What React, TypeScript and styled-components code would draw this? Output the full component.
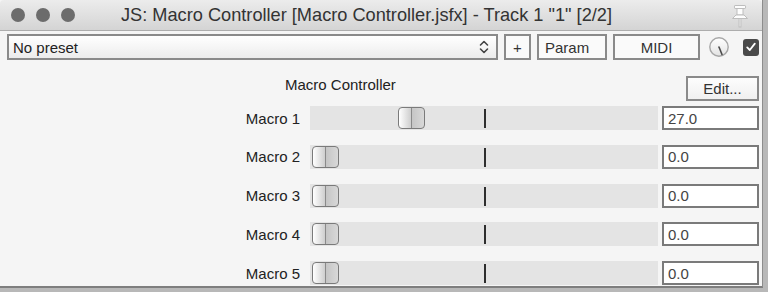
import styled, { createGlobalStyle } from 'styled-components'

const GlobalStyle = createGlobalStyle`
  html, body {
    margin: 0;
    padding: 0;
    background: #e6e6e6;
  }
  body {
    font-family: "Liberation Sans", Arial, sans-serif;
  }
`

interface Macro {
  name: string;
  value: number;
}

const macros: Macro[] = [
  { name: 'Macro 1', value: 27 },
  { name: 'Macro 2', value: 0 },
  { name: 'Macro 3', value: 0 },
  { name: 'Macro 4', value: 0 },
  { name: 'Macro 5', value: 0 },
]

const TRACK_WIDTH = 348
const THUMB_WIDTH = 27

export default function App() {
  return (
    <>
      <GlobalStyle />
      <Screen>
        <Window>
          <TitleBar>
            <Lights>
              <Light />
              <Light />
              <Light />
            </Lights>
            <Title>JS: Macro Controller [Macro Controller.jsfx] - Track 1 "1" [2/2]</Title>
            <Pin />
          </TitleBar>

          <Toolbar>
            <PresetSelect>
              <span>No preset</span>
              <Chevron />
            </PresetSelect>
            <ToolButton $width={27}>+</ToolButton>
            <ToolButton $width={70} $align="left">Param</ToolButton>
            <ToolButton $width={87}>MIDI</ToolButton>
            <Knob />
            <CheckBox>
              <svg width="12" height="12" viewBox="0 0 12 12">
                <path d="M2.2 6.4 L4.8 9 L9.8 2.6" fill="none" stroke="#fff" strokeWidth="1.8" strokeLinecap="round" strokeLinejoin="round" />
              </svg>
            </CheckBox>
          </Toolbar>

          <Header>
            <Heading>Macro Controller</Heading>
            <EditButton>Edit...</EditButton>
          </Header>

          <Sliders>
            {macros.map((m) => (
              <SliderRow key={m.name}>
                <Label>{m.name}</Label>
                <Track>
                  <CenterMark />
                  <Thumb style={{ left: 2 + (m.value / 100) * (TRACK_WIDTH - 4 - THUMB_WIDTH) }} />
                </Track>
                <ValueBox>{m.value.toFixed(1)}</ValueBox>
              </SliderRow>
            ))}
          </Sliders>
        </Window>
      </Screen>
    </>
  )
}

function Pin() {
  return (
    <PinWrap>
      <svg width="20" height="24" viewBox="0 0 20 24">
        <g fill="#fdfdfd" stroke="#bdbdbd" strokeWidth="1">
          <rect x="4.5" y="1.5" width="11" height="3" rx="0.6" />
          <rect x="7" y="4.5" width="6" height="6.5" />
          <path d="M2.5 14.5 L6 11 L14 11 L17.5 14.5 Z" />
          <rect x="9.1" y="14.5" width="1.8" height="8.5" />
        </g>
      </svg>
    </PinWrap>
  )
}

function Chevron() {
  return (
    <svg width="12" height="16" viewBox="0 0 12 16">
      <path d="M2.5 6 L6 2.5 L9.5 6 M2.5 10 L6 13.5 L9.5 10" fill="none" stroke="#444" strokeWidth="1.6" strokeLinecap="round" strokeLinejoin="round" />
    </svg>
  )
}

function Knob() {
  return (
    <KnobWrap>
      <svg width="22" height="22" viewBox="0 0 22 22">
        <defs>
          <linearGradient id="knobFill" x1="0" y1="0" x2="0" y2="1">
            <stop offset="0" stopColor="#ffffff" />
            <stop offset="1" stopColor="#e2e2e2" />
          </linearGradient>
        </defs>
        <circle cx="11" cy="11" r="9.2" fill="url(#knobFill)" stroke="#a6a6a6" strokeWidth="1.4" />
        <path d="M11 11 L14 18.5" stroke="#4a4a4a" strokeWidth="1.6" strokeLinecap="round" />
      </svg>
    </KnobWrap>
  )
}

const Screen = styled.div`
  width: 768px;
  height: 292px;
  overflow: hidden;
  background: #b8b8b8;
`

const Window = styled.div`
  width: 762px;
  height: 286px;
  background: #f5f5f5;
  border-right: 1px solid #8d8d8d;
  border-bottom: 2px solid #7e7e7e;
  display: flex;
  flex-direction: column;
`

const TitleBar = styled.div`
  height: 31px;
  flex-shrink: 0;
  box-sizing: border-box;
  display: flex;
  align-items: center;
  padding-left: 11px;
  background: linear-gradient(#ececec, #d4d4d4);
  border-bottom: 1px solid #adadad;
  border-radius: 4px 4px 0 0;
`

const Lights = styled.div`
  display: flex;
  gap: 11px;
`

const Light = styled.div`
  width: 14px;
  height: 14px;
  border-radius: 50%;
  background: #6c6c6c;
`

const Title = styled.div`
  margin-left: 46px;
  margin-top: 1px;
  font-size: 18.2px;
  color: #333;
  white-space: nowrap;
  flex: 1;
`

const PinWrap = styled.div`
  width: 20px;
  height: 24px;
  margin-right: 12px;
  margin-top: 2px;
`

const Toolbar = styled.div`
  display: flex;
  align-items: center;
  height: 26px;
  margin-top: 3px;
  padding-left: 7px;
`

const PresetSelect = styled.div`
  width: 491px;
  height: 26px;
  box-sizing: border-box;
  border: 2px solid #8a8a8a;
  background: linear-gradient(#ffffff, #ececec);
  display: flex;
  align-items: center;
  justify-content: space-between;
  padding: 0 6px 0 4px;
  font-size: 15px;
  color: #222;
`

const ToolButton = styled.div<{ $width: number; $align?: 'left' | 'center' }>`
  width: ${(p) => p.$width}px;
  height: 26px;
  box-sizing: border-box;
  border: 2px solid #8a8a8a;
  background: #fafafa;
  margin-left: 6px;
  display: flex;
  align-items: center;
  justify-content: ${(p) => (p.$align === 'left' ? 'flex-start' : 'center')};
  padding-left: ${(p) => (p.$align === 'left' ? '6px' : '0')};
  font-size: 15px;
  color: #333;
`

const KnobWrap = styled.div`
  width: 22px;
  height: 22px;
  margin-left: 8px;
`

const CheckBox = styled.div`
  width: 16px;
  height: 17px;
  margin-left: 13px;
  border-radius: 3px;
  background: #4a4a4a;
  display: flex;
  align-items: center;
  justify-content: center;
`

const Header = styled.div`
  display: flex;
  align-items: center;
  justify-content: space-between;
  margin-top: 16px;
  height: 25px;
  padding-left: 285px;
  padding-right: 3px;
`

const Heading = styled.div`
  font-size: 15px;
  color: #222;
  margin-top: -9px;
`

const EditButton = styled.div`
  width: 73px;
  height: 25px;
  box-sizing: border-box;
  border: 2px solid #8a8a8a;
  background: linear-gradient(#fdfdfd, #f0f0f0);
  display: flex;
  align-items: center;
  justify-content: center;
  font-size: 15px;
  color: #333;
`

const Sliders = styled.div`
  display: flex;
  flex-direction: column;
  gap: 14.75px;
  margin-top: 5px;
`

const SliderRow = styled.div`
  display: grid;
  grid-template-columns: 310px ${TRACK_WIDTH}px 101px;
  height: 24px;
  align-items: center;
`

const Label = styled.div`
  text-align: right;
  padding-right: 10px;
  font-size: 15px;
  color: #222;
`

const Track = styled.div`
  position: relative;
  height: 24px;
  background: #e4e4e4;
`

const CenterMark = styled.div`
  position: absolute;
  left: 174px;
  top: 3px;
  width: 2px;
  height: 19px;
  background: #2e2e2e;
`

const Thumb = styled.div`
  position: absolute;
  top: 1px;
  width: ${THUMB_WIDTH}px;
  height: 22px;
  box-sizing: border-box;
  border: 1.5px solid #7a7a7a;
  border-radius: 4px;
  background: linear-gradient(
    to right,
    #ffffff 0%,
    #d0d0d0 46%,
    #8a8a8a 48%,
    #8a8a8a 52%,
    #c6c6c6 54%,
    #d8d8d8 100%
  );
`

const ValueBox = styled.div`
  margin-left: 4px;
  height: 24px;
  box-sizing: border-box;
  border: 2px solid #7a7a7a;
  background: #fff;
  display: flex;
  align-items: center;
  padding-left: 4px;
  font-size: 15px;
  color: #444;
`
